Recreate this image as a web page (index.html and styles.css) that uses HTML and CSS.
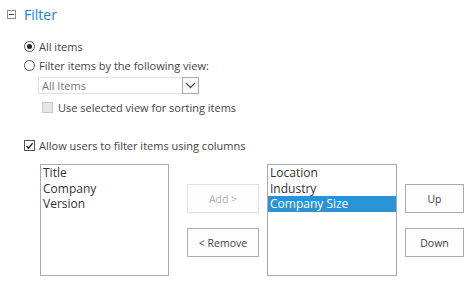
FILE: index.html
```html
<!DOCTYPE html>
<html>
<head>
<meta charset="utf-8">
<link rel="stylesheet" href="styles.css">
</head>
<body>
<div class="section">
  <div class="header">
    <span class="collapse"><span class="minus"></span></span>
    <span class="title">Filter</span>
  </div>
  <div class="options">
    <div class="row">
      <span class="radio checked"></span>
      <span class="label">All items</span>
    </div>
    <div class="row">
      <span class="radio"></span>
      <span class="label">Filter items by the following view:</span>
    </div>
    <div class="select">
      <span class="select-text">All Items</span>
      <span class="select-arrow">
        <svg width="11" height="7" viewBox="0 0 11 7"><path d="M1 1 L5.5 5.5 L10 1" fill="none" stroke="#555" stroke-width="1.3"/></svg>
      </span>
    </div>
    <div class="row sub">
      <span class="checkbox disabled"></span>
      <span class="label">Use selected view for sorting items</span>
    </div>
    <div class="row allow">
      <span class="checkbox">
        <svg width="10" height="10" viewBox="0 0 10 10"><path d="M1.8 5 L4 7.5 L8.5 1.8" fill="none" stroke="#222" stroke-width="1.6"/></svg>
      </span>
      <span class="label">Allow users to filter items using columns</span>
    </div>
    <div class="columns">
      <div class="listbox left">
        <div class="item">Title</div>
        <div class="item">Company</div>
        <div class="item">Version</div>
      </div>
      <div class="btncol mid">
        <div class="btn disabled">Add &gt;</div>
        <div class="btn">&lt; Remove</div>
      </div>
      <div class="listbox right">
        <div class="item">Location</div>
        <div class="item">Industry</div>
        <div class="item selected">Company Size</div>
      </div>
      <div class="btncol ud">
        <div class="btn">Up</div>
        <div class="btn">Down</div>
      </div>
    </div>
  </div>
</div>
</body>
</html>
```

FILE: styles.css
```css
html, body {
  margin: 0;
  padding: 0;
  background: #ffffff;
}
body {
  font-family: "Open Sans", "Noto Sans", sans-serif;
  font-size: 11px;
  color: #444444;
  width: 474px;
  height: 285px;
  overflow: hidden;
}
.section {
  padding: 4px 0 0 7px;
}
.header {
  display: flex;
  align-items: center;
  height: 20px;
}
.collapse {
  width: 7px;
  height: 7px;
  border: 1px solid #8c8c8c;
  display: flex;
  align-items: center;
  justify-content: center;
  margin-right: 8px;
  margin-top: 1px;
}
.minus {
  width: 5px;
  height: 1px;
  background: #444;
}
.title {
  font-size: 14px;
  color: #2b7cc9;
}
.options {
  padding-left: 17px;
  padding-top: 13px;
}
.row {
  display: flex;
  align-items: center;
  height: 19px;
}
.label {
  margin-left: 4px;
  white-space: nowrap;
}
.radio {
  width: 9px;
  height: 9px;
  border: 1px solid #555;
  border-radius: 50%;
  display: flex;
  align-items: center;
  justify-content: center;
  box-sizing: content-box;
}
.radio.checked::after {
  content: "";
  width: 5px;
  height: 5px;
  border-radius: 50%;
  background: #222;
}
.select {
  margin: 2px 0 0 14px;
  width: 159px;
  height: 15px;
  border: 1px solid #e1e1e1;
  display: flex;
  justify-content: space-between;
  align-items: stretch;
}
.select-text {
  padding-left: 3px;
  color: #777;
  line-height: 15px;
}
.select-arrow {
  width: 15px;
  border: 1px solid #aaa;
  margin: -1px -1px -1px 0;
  background: #fafafa;
  display: flex;
  align-items: center;
  justify-content: center;
}
.row.sub {
  margin-left: 18px;
  margin-top: 3px;
  height: 20px;
}
.checkbox {
  width: 9px;
  height: 9px;
  border: 1px solid #555;
  display: flex;
  align-items: center;
  justify-content: center;
  background: #fff;
}
.checkbox.disabled {
  border-color: #c8c8c8;
  background: #e6e6e6;
}
.row.sub .label {
  margin-left: 5px;
}
.row.allow {
  margin-top: 19px;
}
.columns {
  display: flex;
  margin-top: 9px;
  margin-left: 16px;
}
.listbox {
  width: 127px;
  height: 110px;
  border: 1px solid #ababab;
}
.listbox.right {
  width: 128px;
}
.item {
  height: 15.5px;
  line-height: 15.5px;
  padding-left: 2px;
  font-size: 12px;
  color: #333;
  white-space: nowrap;
}
.item.selected {
  background: #2a93d6;
  color: #fff;
}
.btncol {
  display: flex;
  flex-direction: column;
  gap: 15px;
  padding-top: 20px;
}
.btncol.mid {
  margin: 0 8px 0 18px;
}
.btncol.ud {
  margin-left: 8px;
}
.btn {
  width: 70px;
  height: 27px;
  border: 1px solid #ababab;
  background: #fdfdfd;
  display: flex;
  align-items: center;
  justify-content: center;
  font-size: 10.5px;
  color: #444;
}
.btn.disabled {
  border-color: #e1e1e1;
  color: #b1b1b1;
}
.btncol.ud .btn {
  width: 57px;
}
```
